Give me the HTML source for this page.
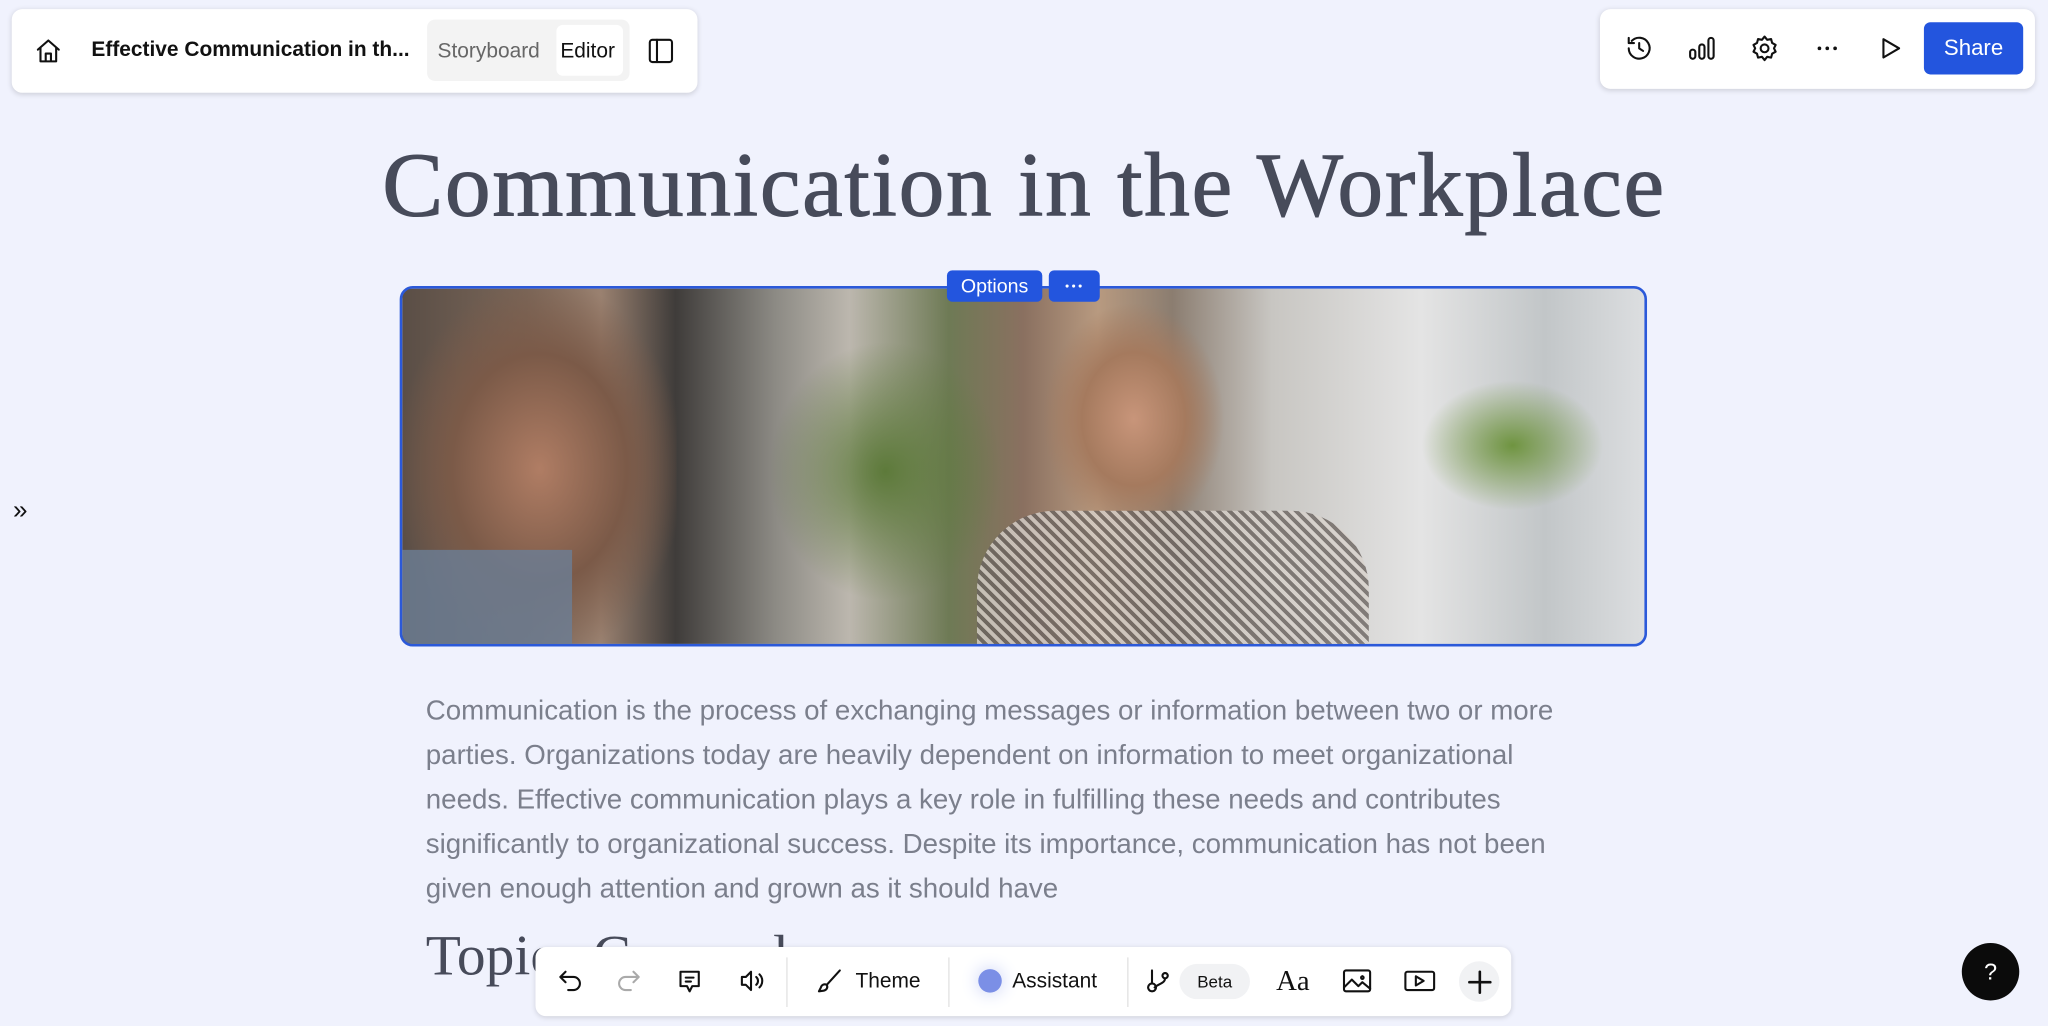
<!DOCTYPE html>
<html><head><meta charset="utf-8"><style>
*{box-sizing:border-box;margin:0;padding:0}
html,body{width:2048px;height:1026px;overflow:hidden;background:#f0f2fd}
#s{width:1568px;height:786px;transform:scale(1.306122);transform-origin:0 0;position:relative;font-family:"Liberation Sans",sans-serif;color:#111}
.card{position:absolute;background:#fff;border-radius:8px;box-shadow:0 1px 4px rgba(0,0,0,.15)}
.abs{position:absolute}
svg{position:absolute;fill:none;stroke:#111;stroke-width:1.6;stroke-linecap:round;stroke-linejoin:round}
</style></head><body><div id="s">
<div class="card" style="left:9px;top:7px;width:525px;height:64px">
 <svg style="left:17px;top:21px" width="22" height="22" viewBox="0 0 22 22"><path d="M3 10L11 3L19 10M5 8.5V19H17V8.5M9 19V13H13V19"/></svg>
 <div class="abs" style="left:61px;top:23px;font-size:16px;font-weight:bold">Effective Communication in th...</div>
 <div class="abs" style="left:318px;top:8px;width:155px;height:47px;background:#f3f3f3;border-radius:6px"></div>
 <div class="abs" style="left:417px;top:12px;width:51px;height:39px;background:#fff;border-radius:5px"></div>
 <div class="abs" style="left:326px;top:24px;font-size:16px;color:#666">Storyboard</div>
 <div class="abs" style="left:420px;top:24px;font-size:16px">Editor</div>
 <svg style="left:486px;top:21px" width="22" height="22" viewBox="0 0 22 22"><rect x="2.5" y="2.5" width="17" height="17" rx="2"/><path d="M8 2.5V19.5"/></svg>
</div>
<div class="card" style="left:1225px;top:7px;width:333px;height:61px">
 <svg style="left:18px;top:18px" width="24" height="24" viewBox="0 0 24 24"><path d="M4 12a8 8 0 1 0 2.3-5.7M4 4v4h4M12 8v4l3 2"/></svg>
 <svg style="left:66px;top:18px" width="24" height="24" viewBox="0 0 24 24"><rect x="3" y="13" width="4" height="7" rx="2"/><rect x="10" y="9" width="4" height="11" rx="2"/><rect x="17" y="4" width="4" height="16" rx="2"/></svg>
 <svg style="left:114px;top:18px" width="24" height="24" viewBox="0 0 24 24"><circle cx="12" cy="12" r="3"/><path d="M12 3l2 2.5 3-.6.8 3 2.7 1.5-1.3 2.6 1.3 2.6-2.7 1.5-.8 3-3-.6L12 21l-2-2.5-3 .6-.8-3L3.5 14.6 4.8 12 3.5 9.4l2.7-1.5.8-3 3 .6z"/></svg>
 <svg style="left:162px;top:18px;fill:#111;stroke:none" width="24" height="24" viewBox="0 0 24 24"><circle cx="6" cy="12" r="1.4"/><circle cx="12" cy="12" r="1.4"/><circle cx="18" cy="12" r="1.4"/></svg>
 <svg style="left:210px;top:18px" width="24" height="24" viewBox="0 0 24 24"><path d="M7 5L19 12L7 19Z"/></svg>
 <div class="abs" style="left:248px;top:10px;width:76px;height:40px;background:#2355de;border-radius:5px;color:#fff;font-size:17px;text-align:center;line-height:40px">Share</div>
</div>
<div class="abs" style="left:10px;top:380px;font-size:20px">»</div>
<div class="abs" style="left:0;width:1568px;top:103px;text-align:center;font-family:'Liberation Serif',serif;font-size:70px;color:#474b5a;letter-spacing:1.3px;-webkit-text-stroke:0.8px #474b5a">Communication in the Workplace</div>
<div class="abs" style="left:306px;top:219px;width:955px;height:276px;border:2px solid #2b59d9;border-radius:10px;overflow:hidden;background:linear-gradient(90deg,#5a4e46 0%,#7a6658 10%,#9a8170 16%,#3f3c3a 22%,#8c8a84 30%,#bcb7ae 36%,#6e7a55 44%,#8a7060 50%,#b89a80 56%,#8b7d70 62%,#c8c6c2 70%,#e4e4e4 82%,#c2c6c8 92%,#dcdee0 100%)">
 <div class="abs" style="left:0;top:0;width:210px;height:276px;background:radial-gradient(ellipse at 50% 50%,#b07d64 0%,#7b5a48 45%,rgba(80,60,50,0) 75%)"></div>
 <div class="abs" style="left:0;top:200px;width:130px;height:76px;background:#6c7e96;opacity:.8"></div>
 <div class="abs" style="left:490px;top:10px;width:140px;height:180px;border-radius:50%;background:radial-gradient(ellipse,#c8957a 0%,#a57a5e 40%,rgba(140,110,90,0) 70%)"></div>
 <div class="abs" style="left:440px;top:170px;width:300px;height:106px;background:repeating-linear-gradient(45deg,#6b6460 0 3px,#d8d2cc 3px 6px);opacity:.8;border-radius:60px 60px 0 0"></div>
 <div class="abs" style="left:280px;top:40px;width:180px;height:200px;background:radial-gradient(ellipse,#5d7a3a 0%,rgba(90,120,60,0) 70%)"></div>
 <div class="abs" style="left:780px;top:70px;width:140px;height:100px;background:radial-gradient(ellipse,#6f9440 0%,rgba(110,150,60,0) 70%)"></div>
</div>
<div class="abs" style="left:725px;top:207px;width:73px;height:24px;background:#2355de;border-radius:4px;color:#fff;font-size:15px;text-align:center;line-height:25px">Options</div>
<div class="abs" style="left:803px;top:207px;width:39px;height:24px;background:#2355de;border-radius:4px"></div>
<svg style="left:812px;top:209px;fill:#fff;stroke:none" width="20" height="20" viewBox="0 0 20 20"><circle cx="5" cy="10" r="1.2"/><circle cx="10" cy="10" r="1.2"/><circle cx="15" cy="10" r="1.2"/></svg>
<div class="abs" style="left:326px;top:528px;width:880px;font-size:21.2px;line-height:34px;color:#7b7f8c">Communication is the process of exchanging messages or information between two or more parties. Organizations today are heavily dependent on information to meet organizational needs. Effective communication plays a key role in fulfilling these needs and contributes significantly to organizational success. Despite its importance, communication has not been given enough attention and grown as it should have</div>
<div class="abs" style="left:326px;top:706px;font-family:'Liberation Serif',serif;font-size:44px;color:#474b5a">Topics Covered</div>
<div class="card" style="left:410px;top:725px;width:747px;height:53px">
 <svg style="left:16px;top:15px" width="22" height="22" viewBox="0 0 22 22"><path d="M7 4L3 8L7 12M3 8H13a5 5 0 0 1 0 10H9"/></svg>
 <svg style="left:60px;top:15px;stroke:#aaa" width="22" height="22" viewBox="0 0 22 22"><path d="M15 4L19 8L15 12M19 8H9a5 5 0 0 0 0 10H13"/></svg>
 <svg style="left:107px;top:15px" width="22" height="22" viewBox="0 0 22 22"><path d="M4 4H18V15H13L11 19L9 15H4Z M8 8.5H14M8 11.5H12"/></svg>
 <svg style="left:155px;top:15px" width="22" height="22" viewBox="0 0 22 22"><path d="M3 8H6L10 4V18L6 14H3Z M14 8a4 4 0 0 1 0 6M16.5 6a7 7 0 0 1 0 10"/></svg>
 <div class="abs" style="left:192px;top:8px;width:1px;height:38px;background:#e2e2e2"></div>
 <svg style="left:214px;top:15px" width="22" height="22" viewBox="0 0 22 22"><path d="M19 3L9 14M9 14c-2-1-4 0-4.5 2L3 19l3.5-.5C9 18 10 16 9 14Z"/></svg>
 <div class="abs" style="left:245px;top:18px;font-size:16px">Theme</div>
 <div class="abs" style="left:316px;top:8px;width:1px;height:38px;background:#e2e2e2"></div>
 <div class="abs" style="left:339px;top:17px;width:18px;height:18px;border-radius:50%;background:#7b8fe6;box-shadow:0 0 14px #c4cdf5"></div>
 <div class="abs" style="left:365px;top:18px;font-size:16px">Assistant</div>
 <div class="abs" style="left:453px;top:8px;width:1px;height:38px;background:#e2e2e2"></div>
 <svg style="left:466px;top:15px" width="22" height="22" viewBox="0 0 22 22"><path d="M6 3V13a3 3 0 1 0 0.1 0M16 5a2 2 0 1 0 0.1 0M16 9c0 4-5 4-8 7"/></svg>
 <div class="abs" style="left:493px;top:13px;width:54px;height:27px;border-radius:14px;background:#f1f2f4;font-size:13px;text-align:center;line-height:27px">Beta</div>
 <div class="abs" style="left:567px;top:13px;font-family:'Liberation Serif',serif;font-size:22px">Aa</div>
 <svg style="left:617px;top:15px" width="24" height="22" viewBox="0 0 24 22"><rect x="2" y="3" width="20" height="16" rx="1.5"/><path d="M2 16L8 10L13 15L16 12L22 17M16 7.5a1 1 0 1 0 .1 0"/></svg>
 <svg style="left:664px;top:15px" width="26" height="22" viewBox="0 0 26 22"><rect x="2" y="4" width="22" height="14" rx="1.5"/><path d="M10 7.5L16 11L10 14.5Z"/></svg>
 <div class="abs" style="left:707px;top:11px;width:31px;height:31px;border-radius:50%;background:#f1f2f4"></div>
 <svg style="left:712px;top:16px;stroke-width:2" width="22" height="22" viewBox="0 0 22 22"><path d="M11 3V19M3 11H19"/></svg>
</div>
<div class="abs" style="left:1502px;top:722px;width:44px;height:44px;border-radius:50%;background:#0b0b0b;color:#fff;font-size:18px;text-align:center;line-height:44px">?</div>
</div></body></html>
